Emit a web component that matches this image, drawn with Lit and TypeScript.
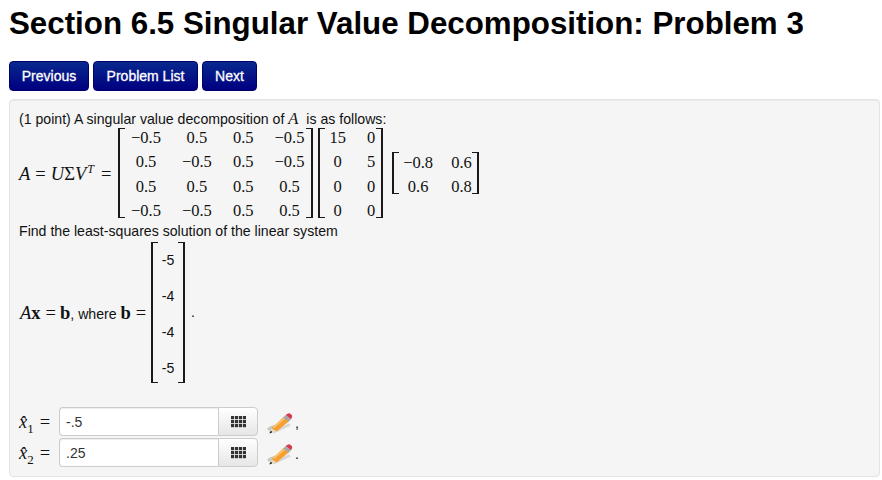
import { LitElement, html, css, svg } from "lit";
import { customElement } from "lit/decorators.js";

const matrixA = [
	["−0.5", "0.5", "0.5", "−0.5"],
	["0.5", "−0.5", "0.5", "−0.5"],
	["0.5", "0.5", "0.5", "0.5"],
	["−0.5", "−0.5", "0.5", "0.5"],
];
const matrixS = [
	["15", "0"],
	["0", "5"],
	["0", "0"],
	["0", "0"],
];
const matrixV = [
	["−0.8", "0.6"],
	["0.6", "0.8"],
];

const gridIcon = html`<svg width="15" height="12" viewBox="0 0 15 12">
	${[0, 4, 8].map((y) =>
		[0, 4, 8, 12].map(
			(x) => svg`<rect x=${x} y=${y} width="3.2" height="3.2" fill="#333"></rect>`,
		),
	)}
</svg>`;

const pencilIcon = html`<svg class="pencil" width="26" height="21" viewBox="0 0 26 24" preserveAspectRatio="none">
	<path d="M0 18 C3 14 8 13 11 13 L7 20 C5 21 1 21 0 18Z" fill="#bbb" opacity="0.8"></path>
	<path d="M6 22 L23 13" stroke="#d4d4d4" stroke-width="3" opacity="0.9"></path>
	<path d="M4.5 17.5 L16.5 4.5 L22 9.5 L9.5 21 Z" fill="#f5a030"></path>
	<path d="M6.5 16.5 L18 5.5" stroke="#fcc87c" stroke-width="1.4"></path>
	<path d="M4.5 17.5 L9.5 21 L2.5 23.5 Z" fill="#e9d8b8"></path>
	<path d="M3 21 L4.6 20.6 L5 22.4 L2.5 23.5Z" fill="#222"></path>
	<path d="M16 5 L18.7 2.4 L24 7.2 L21.6 10 Z" fill="#a8a8a8"></path>
	<path d="M18.7 2.4 L20.6 .8 Q22.4 -.2 24 1.4 Q25.6 3 25 4.8 L24 7 Z" fill="#d63a4c"></path>
</svg>`;

@customElement("app-root")
export class AppRoot extends LitElement {
	static styles = css`
		:host {
			display: block;
			font-family: "Liberation Sans", Arial, sans-serif;
			color: #111;
			width: 882px;
			height: 480px;
			overflow: hidden;
			background: #fff;
		}
		h1 {
			margin: 0;
			padding: 7px 0 0 9px;
			height: 61px;
			box-sizing: border-box;
			font-size: 31.3px;
			line-height: 34px;
			font-weight: 700;
			color: #000;
		}
		.nav {
			display: flex;
			gap: 4px;
			padding-left: 9px;
		}
		.nav a {
			display: block;
			height: 30px;
			box-sizing: border-box;
			text-align: center;
			line-height: 29px;
			font-size: 14px;
			color: #fff;
			border-radius: 4px;
			border: 1px solid #00006a;
			background: linear-gradient(#08288e, #000080);
			-webkit-text-stroke: 0.3px #fff;
		}
		.nav .prev {
			width: 80px;
		}
		.nav .list {
			width: 105px;
		}
		.nav .next {
			width: 55px;
		}
		.well {
			margin: 8px 2px 0 9px;
			height: 378px;
			box-sizing: border-box;
			padding: 10px 9px 0;
			background: #f5f5f5;
			border: 1px solid #e3e3e3;
			border-radius: 4px;
			box-shadow: inset 0 1px 1px rgba(0, 0, 0, 0.05);
			font-size: 14.13px;
			line-height: 18px;
		}
		.math {
			font-family: "Liberation Serif", "Times New Roman", serif;
			font-size: 16.5px;
		}
		.label {
			font-size: 18.5px;
			white-space: nowrap;
			flex: none;
		}
		.eq {
			margin: 0 5px;
		}
		.eq.end {
			margin: 0 0 0 7px;
		}
		.label b {
			font-weight: 700;
		}
		sup {
			font-size: 12px;
			line-height: 0;
			margin-left: 1px;
		}
		sub {
			font-size: 13px;
			line-height: 0;
		}
		.row {
			display: flex;
			align-items: center;
		}
		.row-a {
			height: 90px;
			margin-bottom: 4px;
		}
		.label-a {
			width: 99px;
			padding-top: 2px;
		}
		.gap-s {
			margin-left: 5px;
		}
		.gap-v {
			margin-left: 9px;
		}
		.matrix {
			position: relative;
			display: grid;
			column-gap: 21px;
			justify-items: center;
			align-items: center;
			align-content: center;
			padding: 3px 9px 0 13px;
			height: 90px;
			box-sizing: border-box;
			grid-auto-rows: 24.3px;
			line-height: 24px;
		}
		.matrix.cols-4 {
			grid-template-columns: repeat(4, auto);
		}
		.matrix.cols-2 {
			grid-template-columns: repeat(2, auto);
		}
		.matrix.tight {
			padding: 3px 8px 0 11px;
		}
		.matrix.short {
			height: 42px;
			column-gap: 18px;
			padding: 4px 7px 0 11px;
		}
		.matrix::before,
		.matrix::after,
		.vector::before,
		.vector::after {
			content: "";
			position: absolute;
			top: 0;
			bottom: 0;
			width: 5px;
			border: 1px solid #1a1a1a;
		}
		.matrix::before,
		.vector::before {
			left: 0;
			border-right: 0;
			border-left-width: 2px;
		}
		.matrix::after,
		.vector::after {
			right: 0;
			border-left: 0;
			border-right-width: 2px;
		}
		.line {
			height: 18px;
		}
		.row-b {
			height: 142px;
			margin-top: 1px;
		}
		.label-b {
			width: 132px;
			padding: 2px 0 0 1px;
			box-sizing: border-box;
		}
		.label-b .eq {
			margin: 0 4px 0 5px;
		}
		.label-b .eq.end {
			margin: 0 0 0 5px;
		}
		.label-b .plain {
			font-family: "Liberation Sans", Arial, sans-serif;
			font-size: 14.13px;
		}
		.vector {
			position: relative;
			display: grid;
			grid-auto-rows: 36px;
			align-items: center;
			align-content: center;
			justify-items: center;
			width: 34px;
			height: 141px;
			box-sizing: border-box;
			padding-top: 4px;
			margin-right: 6px;
		}
		.answers {
			margin-top: 24px;
			display: flex;
			flex-direction: column;
			gap: 2px;
		}
		.answer {
			display: flex;
			align-items: center;
			height: 29px;
		}
		.answer .name {
			width: 40px;
		}
		.answer .name .eq {
			margin: 0 0 0 6px;
		}
		.answer input {
			width: 159px;
			height: 29px;
			box-sizing: border-box;
			margin: 0;
			padding: 0 6px;
			font: 14px "Liberation Sans", Arial, sans-serif;
			color: #333;
			background: #fff;
			border: 1px solid #ccc;
			border-right: 0;
			border-radius: 4px 0 0 4px;
			box-shadow: inset 0 1px 1px rgba(0, 0, 0, 0.075);
		}
		.answer button {
			width: 40px;
			height: 29px;
			padding: 0;
			box-sizing: border-box;
			display: flex;
			align-items: center;
			justify-content: center;
			background: linear-gradient(#fff, #e6e6e6);
			border: 1px solid #ccc;
			border-radius: 0 4px 4px 0;
		}
		.pencil {
			margin: 3px 0 0 9px;
			flex: none;
		}
		.mark {
			margin: 3px 0 0 2px;
		}
	`;

	matrix(rows: string[][], extra = "") {
		const cols = rows[0].length;
		return html`<div class="matrix math cols-${cols} ${extra}">
			${rows.flat().map((v) => html`<span>${v}</span>`)}
		</div>`;
	}

	answer(n: number, value: string, mark: string) {
		return html`<div class="answer">
			<span class="label name math"><i>x̂</i><sub>${n}</sub><span class="eq">=</span></span>
			<input type="text" .value=${value} />
			<button type="button">${gridIcon}</button>
			${pencilIcon}
			<span class="mark">${mark}</span>
		</div>`;
	}

	render() {
		return html`
			<h1>Section 6.5 Singular Value Decomposition: Problem 3</h1>
			<nav class="nav">
				<a class="prev">Previous</a>
				<a class="list">Problem List</a>
				<a class="next">Next</a>
			</nav>
			<div class="well">
				<div class="line">
					(1 point) A singular value decomposition of
					<i class="math">A</i>&nbsp; is as follows:
				</div>
				<div class="row row-a">
					<span class="label label-a math"><i>A</i><span class="eq">=</span><i>U</i>Σ<i>V</i><sup><i>T</i></sup><span class="eq end">=</span></span>
					${this.matrix(matrixA)}
					<span class="gap-s">${this.matrix(matrixS, "tight")}</span>
					<span class="gap-v">${this.matrix(matrixV, "tight short")}</span>
				</div>
				<div class="line">Find the least-squares solution of the linear system</div>
				<div class="row row-b">
					<span class="label label-b math"><i>A</i><b>x</b><span class="eq">=</span><b>b</b><span class="plain">, where </span><b>b</b><span class="eq end">=</span></span>
					<div class="vector">
						<span>-5</span><span>-4</span><span>-4</span><span>-5</span>
					</div>
					<span>.</span>
				</div>
				<div class="answers">
					${this.answer(1, "-.5", ",")} ${this.answer(2, ".25", ".")}
				</div>
			</div>
		`;
	}
}
